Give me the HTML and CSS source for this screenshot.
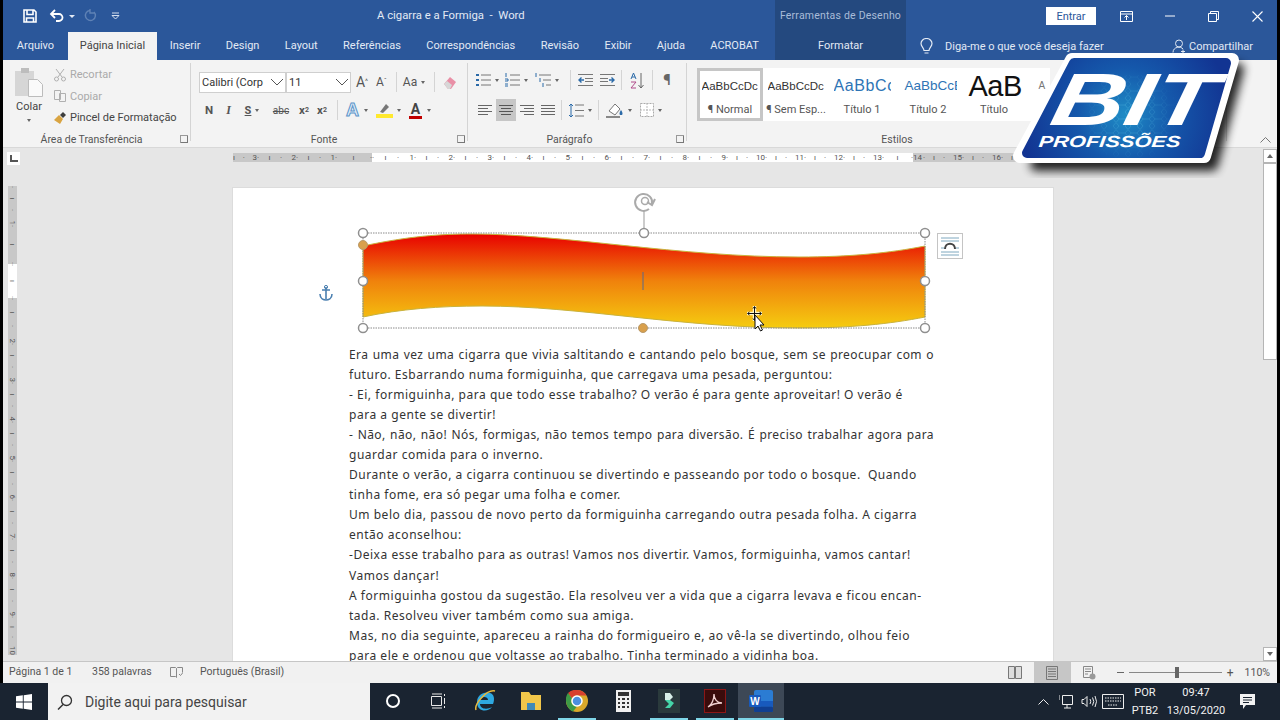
FILE: index.html
```html
<!DOCTYPE html>
<html lang="pt-BR">
<head>
    <meta charset="UTF-8">
    <title>A cigarra e a Formiga - Word</title>
    <link rel="stylesheet" href="styles.css">
</head>
<body>

    <div class="window">

        <div class="titlebar">
            <div class="qat">
                <svg width="16" height="16" viewBox="0 0 16 16"><path d="M2 2h10l2 2v10H2z M5 2.500v4h6v-4 M4.500 14v-4h7v4" fill="none" stroke="#fff" stroke-width="1.600"/></svg>
                <svg class="qat-undo" width="18" height="14" viewBox="0 0 18 14"><path d="M6 1 2 5l4 4M2 5h8a3.500 3.500 0 0 1 0 7H7" fill="none" stroke="#fff" stroke-width="1.800"/></svg>
                <span class="qat-caret"></span>
                <svg class="qat-redo" width="14" height="14" viewBox="0 0 14 14"><path d="M11 3a5 5 0 1 1-4-1.500M7 0v4h4" fill="none" stroke="#5f82b5" stroke-width="1.400"/></svg>
                <svg class="qat-more" width="9" height="8" viewBox="0 0 9 8"><path d="M1 1h7M1 3.500h7L4.500 7z" fill="none" stroke="#d5dfee"/></svg>
            </div>
            <div class="doc-title">A cigarra e a Formiga&nbsp; -&nbsp; Word</div>
            <div class="context-title">Ferramentas de Desenho</div>
            <div class="win-actions">
                <button class="signin" type="button">Entrar</button>
                <svg class="win-ribbon" width="13" height="11" viewBox="0 0 13 11"><path d="M.5.500h12v10H.500zM.5 3h12M6.500 9V4.500M4.500 6.500l2-2 2 2" fill="none" stroke="#fff"/></svg>
                <svg class="win-min" width="10" height="2" viewBox="0 0 10 2"><path d="M0 1h10" stroke="#fff"/></svg>
                <svg class="win-max" width="11" height="11" viewBox="0 0 11 11"><path d="M.5 2.500h8v8h-8zM2.500 2.500v-2h8v8h-2" fill="none" stroke="#fff"/></svg>
                <svg class="win-close" width="11" height="11" viewBox="0 0 11 11"><path d="m.5.500 10 10m0-10-10 10" stroke="#fff" stroke-width="1.100"/></svg>
            </div>
        </div>

        <div class="tabs">
            <div class="tab-list">
                <span class="tab tab-file">Arquivo</span>
                <span class="tab tab-active">Página Inicial</span>
                <span class="tab">Inserir</span>
                <span class="tab">Design</span>
                <span class="tab">Layout</span>
                <span class="tab">Referências</span>
                <span class="tab">Correspondências</span>
                <span class="tab">Revisão</span>
                <span class="tab">Exibir</span>
                <span class="tab">Ajuda</span>
                <span class="tab">ACROBAT</span>
            </div>
            <span class="tab tab-context">Formatar</span>
            <span class="tell-me">
                <svg width="13" height="17" viewBox="0 0 13 17"><path d="M4 12.500C4 10 1 8.500 1 5.500a5.500 5 0 0 1 11 0c0 3-3 4.500-3 7zM4.500 15h4" fill="none" stroke="#e3eaf5" stroke-width="1.200"/></svg>
                Diga-me o que você deseja fazer
            </span>
            <span class="share">
                <svg width="14" height="14" viewBox="0 0 14 14"><path d="M7 8a3.500 3.500 0 1 0 0-7 3.500 3.500 0 0 0 0 7zM1 13.500c0-6 8-6.500 10-3.500M11 10.500v3.500M9 12.500h4" fill="none" stroke="#dfe7f2"/></svg>
                Compartilhar
            </span>
        </div>

        <div class="ribbon">

            <section class="group group-clip">
                <div class="group-body clip-body">
                    <div class="paste">
                        <svg width="29" height="30" viewBox="0 0 29 30"><rect x="0" y="3" width="19" height="25" fill="#d6d6d6"/><rect x="6" y="0" width="8" height="5" fill="#bdbdbd"/><path d="M13.500 11.500h9l5 5v12h-14z" fill="#fafafa" stroke="#bcbcbc"/></svg>
                        <span class="paste-label">Colar</span>
                        <span class="caret"></span>
                    </div>
                    <div class="clip-list">
                        <div class="clip-row muted">
                            <svg width="14" height="14" viewBox="0 0 14 14"><path d="m3 1 6 8M11 1 5 9" stroke="#b0b0b0" fill="none"/><circle cx="3.500" cy="11" r="2" fill="none" stroke="#b0b0b0"/><circle cx="10.500" cy="11" r="2" fill="none" stroke="#b0b0b0"/></svg>
                            Recortar
                        </div>
                        <div class="clip-row muted">
                            <svg width="14" height="14" viewBox="0 0 14 14"><path d="M1.500 1.500h6v9h-6zM6.500 4.500h6v8h-6z" fill="#f3f3f3" stroke="#b0b0b0"/></svg>
                            Copiar
                        </div>
                        <div class="clip-row">
                            <svg width="14" height="14" viewBox="0 0 14 14"><path d="M1 9l5-5 4 4-3 5z" fill="#d9a441"/><path d="m7 4 3-3 3 3-3 3z" fill="#3d3d3d"/></svg>
                            Pincel de Formatação
                        </div>
                    </div>
                </div>
                <div class="group-foot"><span class="group-label">Área de Transferência</span><span class="launcher"></span></div>
            </section>

            <section class="group group-font">
                <div class="group-body font-body">
                    <div class="tool-row">
                        <div class="combo combo-name">Calibri (Corp<svg width="14" height="8" viewBox="0 0 14 8"><path d="m1 1 6 6 6-6" fill="none" stroke="#555"/></svg></div>
                        <div class="combo combo-size">11<svg width="14" height="8" viewBox="0 0 14 8"><path d="m1 1 6 6 6-6" fill="none" stroke="#555"/></svg></div>
                        <span class="tool w20 big-a">A<sup>^</sup></span>
                        <span class="tool w19 small-a">A<sup>ˇ</sup></span>
                        <span class="sep sep-a"></span>
                        <span class="tool w28 case-a">Aa<span class="caret"></span></span>
                        <span class="sep sep-b"></span>
                        <svg class="eraser" width="15" height="15" viewBox="0 0 15 15"><path d="m2 9 6-7 6 5-5 7H6z" fill="#e98fa6"/><path d="m2 9 3-3 5 4-2 4H6z" fill="#d7d7d7"/></svg>
                    </div>
                    <div class="tool-row">
                        <span class="tool w20 fmt-b">N</span>
                        <span class="tool w19 fmt-i">I</span>
                        <span class="tool w28 fmt-s"><u>S</u><span class="caret"></span></span>
                        <span class="tool w30 fmt-x"><s>abc</s></span>
                        <span class="tool w16 fmt-b">x<sub>2</sub></span>
                        <span class="tool w20 fmt-b">x<sup>2</sup></span>
                        <span class="sep sep-c"></span>
                        <span class="tool w30 fx-a"><span class="fx-letter">A</span><span class="caret"></span></span>
                        <span class="tool w32">
                            <svg width="17" height="16" viewBox="0 0 17 16"><path d="M4 10 10 2l3 3-6 6z" fill="#777"/><rect y="12" width="17" height="4" fill="#ffe92e"/></svg><span class="caret"></span>
                        </span>
                        <span class="tool w32 color-a"><span class="color-letter">A</span><span class="caret"></span></span>
                    </div>
                </div>
                <div class="group-foot"><span class="group-label">Fonte</span><span class="launcher"></span></div>
            </section>

            <section class="group group-para">
                <div class="group-body para-body">
                    <div class="tool-row">
                        <span class="tool w26"><svg width="15" height="14" viewBox="0 0 15 14"><path d="M5 2h10M5 7h10M5 12h10" stroke="#777"/><path d="M0 2h3M0 7h3M0 12h3" stroke="#2b6aa8" stroke-width="2"/></svg><span class="caret"></span></span>
                        <span class="tool w32"><svg width="15" height="14" viewBox="0 0 15 14"><path d="M5 2h10M5 7h10M5 12h10" stroke="#777"/><path d="M1 0v4M0 6h3v2H0M0 11h3M0 13h3" stroke="#2b6aa8" fill="none"/></svg><span class="caret"></span></span>
                        <span class="tool w30"><svg width="16" height="14" viewBox="0 0 16 14"><path d="M4 2h12M8 7h8M11 12h5" stroke="#777"/><path d="M1 0v4M5 5v4M8 10v4" stroke="#2b6aa8"/></svg><span class="caret"></span></span>
                        <span class="sep sep-d"></span>
                        <span class="tool w22"><svg width="15" height="12" viewBox="0 0 15 12"><path d="M0 .500h15M7 4.500h8M7 7.500h8M0 11.500h15" stroke="#777"/><path d="M6 6H1M3.500 3.500 1 6l2.500 2.500" fill="none" stroke="#2b6aa8" stroke-width="1.400"/></svg></span>
                        <span class="tool w22"><svg width="15" height="12" viewBox="0 0 15 12"><path d="M0 .500h15M0 4.500h8M0 7.500h8M0 11.500h15" stroke="#777"/><path d="M9 6h5M11.500 3.500 14 6l-2.500 2.500" fill="none" stroke="#2b6aa8" stroke-width="1.400"/></svg></span>
                        <span class="sep sep-e"></span>
                        <span class="tool w24"><svg width="15" height="17" viewBox="0 0 15 17"><path d="M1 7 3.500 1 6 7M2 5h3" fill="none" stroke="#2b6aa8"/><path d="M1 10h5l-5 6h5" fill="none" stroke="#b04a8a"/><path d="M11 1v15M8.500 13l2.500 3 2.500-3" fill="none" stroke="#666"/></svg></span>
                        <span class="sep sep-f"></span>
                        <span class="tool w22 pilcrow">¶</span>
                    </div>
                    <div class="tool-row">
                        <span class="tool w22"><svg width="14" height="11" viewBox="0 0 14 11"><path d="M0 .500h14M0 3.500h10M0 6.500h14M0 9.500h10" stroke="#666"/></svg></span>
                        <span class="tool w20 tool-on"><svg width="14" height="11" viewBox="0 0 14 11"><path d="M0 .500h14M2 3.500h10M0 6.500h14M2 9.500h10" stroke="#555"/></svg></span>
                        <span class="tool w21"><svg width="14" height="11" viewBox="0 0 14 11"><path d="M0 .500h14M4 3.500h10M0 6.500h14M4 9.500h10" stroke="#666"/></svg></span>
                        <span class="tool w21"><svg width="14" height="11" viewBox="0 0 14 11"><path d="M0 .500h14M0 3.500h14M0 6.500h14M0 9.500h14" stroke="#666"/></svg></span>
                        <span class="sep sep-g"></span>
                        <span class="tool w30"><svg width="16" height="15" viewBox="0 0 16 15"><path d="M7 2h9M7 7.500h9M7 13h9" stroke="#777"/><path d="M3 1v13M1 3l2-2 2 2M1 12l2 2 2-2" fill="none" stroke="#2b6aa8"/></svg><span class="caret"></span></span>
                        <span class="sep sep-h"></span>
                        <span class="tool w34"><svg width="18" height="17" viewBox="0 0 18 17"><path d="M3 9 9 2l5 5-5 6z" fill="#fff" stroke="#777"/><path d="M15 8c2 3 2 5 0 5s-2-2 0-5z" fill="#2b6aa8"/><path d="M0 15h14" stroke="#888" stroke-width="2"/></svg><span class="caret"></span></span>
                        <span class="tool w30"><svg width="14" height="14" viewBox="0 0 14 14"><path d="M.500.500h13v13H.500z" fill="#fff" stroke="#aaa" stroke-dasharray="2 1"/><path d="M7 0v14M0 7h14" stroke="#bbb" stroke-dasharray="2 1"/></svg><span class="caret"></span></span>
                    </div>
                </div>
                <div class="group-foot"><span class="group-label">Parágrafo</span><span class="launcher"></span></div>
            </section>

            <section class="group group-styles">
                <div class="gallery">
                    <div class="style-card style-selected"><span class="style-prev">AaBbCcDc</span><span class="style-name">¶ Normal</span></div>
                    <div class="style-card"><span class="style-prev">AaBbCcDc</span><span class="style-name">¶ Sem Esp...</span></div>
                    <div class="style-card"><span class="style-prev prev-h1">AaBbCc</span><span class="style-name">Título 1</span></div>
                    <div class="style-card"><span class="style-prev prev-h2">AaBbCcE</span><span class="style-name">Título 2</span></div>
                    <div class="style-card"><span class="style-prev prev-title">AaB</span><span class="style-name">Título</span></div>
                    <div class="style-card"><span class="style-prev prev-more">A</span></div>
                </div>
                <div class="group-foot styles-foot"><span class="group-label">Estilos</span></div>
            </section>

            <svg class="collapse" width="11" height="6" viewBox="0 0 11 6"><path d="m.5 5.500 5-5 5 5" fill="none" stroke="#777"/></svg>
        </div>

        <div class="work">
            <div class="work-main">
                <div class="ruler-row">
                    <span class="tab-stop"><svg width="8" height="7" viewBox="0 0 8 7"><path d="M1 0v6h7" fill="none" stroke="#555" stroke-width="2"/></svg></span>
                    <div class="ruler">
                        <div class="ruler-part ruler-off">
                            <span class="rc rc-24">ı · 3</span><span class="rc">· ı · 2</span><span class="rc">· ı · 1</span><span class="rc rc-37">· ı ·</span>
                        </div>
                        <div class="ruler-part ruler-on">
                            <span class="rc rc-42">· ı · 1</span><span class="rc">· ı · 2</span><span class="rc">· ı · 3</span><span class="rc">· ı · 4</span><span class="rc">· ı · 5</span><span class="rc">· ı · 6</span><span class="rc">· ı · 7</span><span class="rc">· ı · 8</span><span class="rc">· ı · 9</span><span class="rc">· ı · 10</span><span class="rc">· ı · 11</span><span class="rc">· ı · 12</span><span class="rc">· ı · 13</span><span class="rc rc-31">· ı ·</span>
                        </div>
                        <div class="ruler-part ruler-off">
                            <span class="rc rc-10">14</span><span class="rc">· ı · 15</span><span class="rc">· ı · 16</span><span class="rc">· ı · 17</span>
                        </div>
                    </div>
                </div>

                <div class="doc-area">
                    <div class="vruler">
                        <span class="vc vc-off">· ı · 1</span>
                        <span class="vc vc-off">· ı ·</span>
                        <span class="vc vc-on">· ı ·</span>
                        <span class="vc vc-off vc-45">· ı · 2</span>
                        <span class="vc vc-off">· ı · 3</span>
                        <span class="vc vc-off">· ı · 4</span>
                        <span class="vc vc-off">· ı · 5</span>
                        <span class="vc vc-off">· ı · 6</span>
                        <span class="vc vc-off">· ı · 7</span>
                        <span class="vc vc-off">· ı · 8</span>
                        <span class="vc vc-off">· ı · 9</span>
                        <span class="vc vc-off">· ı · 10</span>
                    </div>
                    <div class="page">
                        <svg class="shape" width="670" height="157" viewBox="310 188 670 157">
                            <defs>
                                <linearGradient id="waveFill" x1="0" y1="0" x2="0" y2="1">
                                    <stop offset="0" stop-color="#e80000"/>
                                    <stop offset="0.5" stop-color="#f0820c"/>
                                    <stop offset="1" stop-color="#f5cc10"/>
                                </linearGradient>
                            </defs>
                            <path d="M363 246C410 236 440 234 473 234C560 234 680 257 799 257C850 257 890 253 925 246V317C890 324 850 328 799 328C680 328 580 306 482 306C440 306 400 309 363 317Z" fill="url(#waveFill)" stroke="#c9b23c" stroke-width="1"/>
                            <rect x="363" y="233" width="562" height="95" fill="none" stroke="#8a8a8a" stroke-dasharray="1.500 1"/>
                            <path d="M644 211v22" stroke="#999"/>
                            <path d="M652 204a8.500 8.500 0 1 0-3 5M655 199l-3 6-5-3" fill="none" stroke="#aaa" stroke-width="2"/>
                            <circle cx="645" cy="201" r="3.500" fill="none" stroke="#aaa" stroke-width="1.500"/>
                            <g fill="#fff" stroke="#8f8f8f" stroke-width="1.500">
                                <circle cx="363" cy="233" r="4.500"/><circle cx="644" cy="233" r="4.500"/><circle cx="925" cy="233" r="4.500"/>
                                <circle cx="363" cy="281" r="4.500"/><circle cx="925" cy="281" r="4.500"/>
                                <circle cx="363" cy="328" r="4.500"/><circle cx="925" cy="328" r="4.500"/>
                            </g>
                            <g fill="#d9a04c" stroke="#b99a6a">
                                <circle cx="363" cy="245" r="4.500"/><circle cx="643" cy="328" r="4.500"/>
                            </g>
                            <path d="M643 272v18" stroke="#5b6b8c"/>
                            <path d="M326 287v12M322 290h8M320 294c0 5 4 6 6 6s6-1 6-6" fill="none" stroke="#4a7fb0" stroke-width="1.600"/>
                            <circle cx="326" cy="287" r="1.600" fill="none" stroke="#4a7fb0"/>
                            <rect x="937.500" y="233.500" width="25" height="25" fill="#fff" stroke="#c4c4c4"/>
                            <path d="M941 238h18M941 241h18M941 252h18M941 255h18M941 248h4M955 248h4" stroke="#7fa8bf"/>
                            <path d="M945 249c0-7 10-7 10 0" fill="none" stroke="#444" stroke-width="2"/>
                            <path d="M754.500 306v15M747 313.500h15" stroke="#fff6c8" stroke-width="3.500"/>
                            <path d="M754.500 307v13M748 313.500h13M753 308.500l1.500-2 1.500 2M753 318.500l1.500 2 1.500-2M749.500 312l-2 1.500 2 1.500M759.500 312l2 1.500-2 1.500" fill="none" stroke="#111"/>
                            <path d="M755 315v14l3-3 2.500 5 2-1-2.500-5h4z" fill="#fff" stroke="#111"/>
                        </svg>
                        <div class="story">
                            <span class="line line-full">Era uma vez uma cigarra que vivia saltitando e cantando pelo bosque, sem se preocupar com o</span>
                            <span class="line">futuro. Esbarrando numa formiguinha, que carregava uma pesada, perguntou:</span>
                            <span class="line">- Ei, formiguinha, para que todo esse trabalho? O verão é para gente aproveitar! O verão é</span>
                            <span class="line">para a gente se divertir!</span>
                            <span class="line line-full">- Não, não, não! Nós, formigas, não temos tempo para diversão. É preciso trabalhar agora para</span>
                            <span class="line">guardar comida para o inverno.</span>
                            <span class="line">Durante o verão, a cigarra continuou se divertindo e passeando por todo o bosque.&nbsp; Quando</span>
                            <span class="line">tinha fome, era só pegar uma folha e comer.</span>
                            <span class="line">Um belo dia, passou de novo perto da formiguinha carregando outra pesada folha. A cigarra</span>
                            <span class="line">então aconselhou:</span>
                            <span class="line">-Deixa esse trabalho para as outras! Vamos nos divertir. Vamos, formiguinha, vamos cantar!</span>
                            <span class="line">Vamos dançar!</span>
                            <span class="line">A formiguinha gostou da sugestão. Ela resolveu ver a vida que a cigarra levava e ficou encan-</span>
                            <span class="line">tada. Resolveu viver também como sua amiga.</span>
                            <span class="line">Mas, no dia seguinte, apareceu a rainha do formigueiro e, ao vê-la se divertindo, olhou feio</span>
                            <span class="line">para ele e ordenou que voltasse ao trabalho. Tinha terminado a vidinha boa.</span>
                        </div>
                    </div>
                </div>
            </div>

            <div class="scrollbar">
                <span class="scroll-btn"><span class="arrow-up"></span></span>
                <span class="scroll-thumb"></span>
                <span class="scroll-track"></span>
                <span class="scroll-btn"><span class="arrow-down"></span></span>
            </div>
        </div>

        <div class="statusbar">
            <span class="st-page">Página 1 de 1</span>
            <span class="st-words">358 palavras</span>
            <svg class="st-book" width="13" height="13" viewBox="0 0 13 13"><path d="M.5 1.500h5l1 1v9l-1-1h-5zM6.500 2.500l1-1h5v5M9 8l1.500 1.500L13 6.500" fill="none" stroke="#888"/></svg>
            <span class="st-lang">Português (Brasil)</span>
            <div class="st-right">
                <svg width="14" height="13" viewBox="0 0 14 13"><path d="M.5.500h6v12h-6zM7.500.500h6v12h-6z" fill="#ddd" stroke="#777"/></svg>
                <span class="view-on"><svg width="12" height="14" viewBox="0 0 12 14"><path d="M.5.500h11v13H.5z M2 3h8M2 5.500h8M2 8h8M2 10.500h8" fill="none" stroke="#777"/></svg></span>
                <svg class="view-web" width="13" height="14" viewBox="0 0 13 14"><path d="M.5.500h9v11H.5zM2 3h6M2 5.500h6M2 8h3" fill="none" stroke="#888"/><circle cx="9.500" cy="10.500" r="3" fill="#999"/></svg>
                <span class="zoom-minus"></span>
                <span class="zoom-track"><span class="zoom-thumb"></span></span>
                <span class="zoom-plus">+</span>
                <span class="zoom-pct">110%</span>
            </div>
        </div>
    </div>

    <div class="taskbar">
        <span class="start">
            <svg width="16" height="16" viewBox="0 0 16 16"><path d="M0 2.300 6.800 1.300V7.500H0zM7.700 1.200 16 0V7.500H7.700zM0 8.400H6.800V14.700L0 13.700zM7.700 8.400H16V16L7.700 14.800z" fill="#fff"/></svg>
        </span>
        <div class="search">
            <svg width="16" height="16" viewBox="0 0 16 16"><circle cx="9.500" cy="6.500" r="5" fill="none" stroke="#333" stroke-width="1.300"/><path d="M6 10.500 1 15.500" stroke="#333" stroke-width="1.500"/></svg>
            Digite aqui para pesquisar
        </div>
        <span class="task">
            <svg width="16" height="16" viewBox="0 0 16 16"><circle cx="8" cy="8" r="6" fill="none" stroke="#fff" stroke-width="2"/></svg>
        </span>
        <span class="task">
            <svg width="16" height="16" viewBox="0 0 16 16"><path d="M.5 3.500h10v9H.5zM1 1h10M1 15h10M13.500 1v2M13.500 5v6M13.500 13v2" fill="none" stroke="#e8e8e8"/></svg>
        </span>
        <span class="task">
            <svg width="24" height="24" viewBox="0 0 24 24"><path d="M20 15h-13c0 5 7 6 12 3-3 5-15 6-15-5C4 6 11 2 17 4c4 1 5 6 3 11zM7 11h8c0-4-7-4-8 0z" fill="#2ea8e0"/><path d="M3 21C1 15 14 0 22 2" fill="none" stroke="#e8b83c" stroke-width="1.500"/></svg>
        </span>
        <span class="task">
            <svg width="20" height="18" viewBox="0 0 20 18"><path d="M0 0h8l2 3h10v15H0z" fill="#f0c64a"/><rect x="6" y="11" width="8" height="7" fill="#3f89b8"/></svg>
        </span>
        <span class="task task-run">
            <svg width="22" height="22" viewBox="0 0 22 22"><circle cx="11" cy="11" r="11" fill="#d9a82a"/><path d="M11 0a11 11 0 0 1 9.500 5.500H11a5.500 5.500 0 0 0-5 3L2 3a11 11 0 0 1 9-3z" fill="#d8402f"/><path d="M2 3 6 8.500A5.500 5.500 0 0 0 11 16.500L7 21.500C0 18-2 9 2 3z" fill="#3d9a46"/><circle cx="11" cy="11" r="5" fill="#4d8fe0" stroke="#fff" stroke-width="1.500"/></svg>
        </span>
        <span class="task">
            <svg width="15" height="22" viewBox="0 0 15 22"><rect width="15" height="22" fill="#f0f0f0"/><rect x="2" y="2" width="11" height="4" fill="#333"/><path d="M2 9h2M6 9h3M11 9h2M2 13h2M6 13h3M11 13h2M2 17h2M6 17h3M11 17h2" stroke="#333" stroke-width="2"/></svg>
        </span>
        <span class="task task-run">
            <svg width="22" height="24" viewBox="0 0 22 24"><rect width="22" height="24" fill="#2a3a3c"/><path d="M7 4h5l3 4-3 3H7z" fill="#d8f0e8"/><path d="M7 11h5l4 3-4 5H7l4-4z" fill="#45d6a8"/></svg>
        </span>
        <span class="task task-run">
            <svg width="22" height="24" viewBox="0 0 22 24"><rect x=".500" y=".500" width="21" height="23" fill="#3a0c0c" stroke="#8c1616"/><path d="M4 18c4-2 6-8 6-13 0 5 3 9 8 9-4 0-10 1-14 4z" fill="none" stroke="#f0d0d0" stroke-width="1.300"/></svg>
        </span>
        <span class="task task-run task-word">
            <svg width="24" height="22" viewBox="0 0 24 22"><rect x="5" width="19" height="22" rx="2" fill="#2b7cd3"/><rect x="5" y="11" width="19" height="5.500" fill="#185abd"/><rect x="5" y="16.500" width="19" height="5.500" rx="1" fill="#103f91"/><rect y="5" width="12" height="12" rx="1" fill="#185abd"/><text class="word-w" x="6" y="14.500" text-anchor="middle">W</text></svg>
        </span>
        <div class="tray">
            <svg width="11" height="6" viewBox="0 0 11 6"><path d="m.5 5.500 5-5 5 5" fill="none" stroke="#eee"/></svg>
            <svg class="tray-net" width="14" height="15" viewBox="0 0 14 15"><path d="M3.500 1.500h10v9h-10zM0 1v5M8 11v3M5 14h7" fill="none" stroke="#eee"/></svg>
            <svg class="tray-vol" width="16" height="13" viewBox="0 0 16 13"><path d="M1 4.500h2l3-3v10l-3-3H1zM9 4q1.500 2.500 0 5M11.500 2.500q2.500 4 0 8M14 1q3 5.500 0 11" fill="none" stroke="#eee"/></svg>
            <svg class="tray-kbd" width="22" height="15" viewBox="0 0 22 15"><path d="M.5.500h21v14H.5z" fill="none" stroke="#eee"/><path d="M3 4h16M3 7h16M6 11h10" stroke="#eee" stroke-dasharray="1.500 1"/></svg>
            <span class="tray-lang">POR<br>PTB2</span>
            <span class="tray-clock">09:47<br>13/05/2020</span>
            <svg class="tray-note" width="15" height="15" viewBox="0 0 15 15"><path d="M0 0h15v11H6l-3 4v-4H0z" fill="#f2f2f2"/><path d="M3 3.500h9M3 6h9M3 8.500h6" stroke="#1a2431"/></svg>
        </div>
    </div>

    <svg class="logo" width="250" height="130" viewBox="1005 48 250 130">
        <defs>
            <radialGradient id="logoFill" gradientUnits="userSpaceOnUse" cx="1125" cy="115" r="105">
                <stop offset="0" stop-color="#1f8cc6"/>
                <stop offset="0.45" stop-color="#1558ab"/>
                <stop offset="1" stop-color="#123492"/>
            </radialGradient>
            <radialGradient id="hexFade" gradientUnits="userSpaceOnUse" cx="1130" cy="115" r="50">
                <stop offset="0" stop-color="#fff"/>
                <stop offset="1" stop-color="#000"/>
            </radialGradient>
            <pattern id="hexCells" width="12" height="14" patternUnits="userSpaceOnUse">
                <path d="M3 0 0 3.500 3 7h6l3 3.500L9 14M3 14l-3-3.500M9 0l3 3.500M3 7 0 10.500M9 7l3-3.500" fill="none" stroke="#6fd6f0" stroke-width="0.700"/>
            </pattern>
            <mask id="hexMask">
                <rect x="1005" y="48" width="250" height="130" fill="url(#hexFade)"/>
            </mask>
            <filter id="logoShadow" x="-15%" y="-15%" width="130%" height="140%">
                <feGaussianBlur stdDeviation="5"/>
            </filter>
        </defs>
        <path d="M1078 64H1232L1206 160H1030Z" fill="#000" opacity="0.85" stroke="#000" stroke-width="12" stroke-linejoin="round" filter="url(#logoShadow)" transform="translate(6 5)"/>
        <path d="M1072 60H1232L1204 156H1020Z" fill="#fff" stroke="#fff" stroke-width="14" stroke-linejoin="round"/>
        <path d="M1074 63H1226L1200 153H1027Z" fill="url(#logoFill)" stroke="url(#logoFill)" stroke-width="10" stroke-linejoin="round"/>
        <rect x="1080" y="75" width="100" height="85" fill="url(#hexCells)" mask="url(#hexMask)" opacity="0.4"/>
        <text class="logo-bit" x="1048" y="125" textLength="163" lengthAdjust="spacingAndGlyphs" transform="translate(26.500 0) skewX(-12)">BIT</text>
        <text class="logo-sub" x="1038" y="147" textLength="142" lengthAdjust="spacingAndGlyphs" transform="translate(15.600 0) skewX(-6)">PROFISSÕES</text>
    </svg>

</body>
</html>
```

FILE: styles.css
```css
* {
    box-sizing: border-box;
}
body {
    margin: 0;
    width: 1280px;
    height: 720px;
    overflow: hidden;
    position: relative;
    background: #000;
    font-family: Roboto, "Noto Sans", sans-serif;
    font-size: 11px;
    color: #444;
}
svg {
    flex: none;
}

/* window */
.window {
    margin: 0 3px;
    height: 683px;
    display: flex;
    flex-direction: column;
}
.titlebar {
    height: 32px;
    background: #2b579a;
    color: #e3eaf5;
    display: flex;
    align-items: center;
}
.qat {
    width: 372px;
    padding-left: 19px;
    display: flex;
    align-items: center;
}
.qat-undo {
    margin-left: 11px;
}
.qat-caret {
    margin-left: 2px;
    border: 3px solid transparent;
    border-top-color: #e3eaf5;
    border-bottom: 0;
}
.qat-redo {
    margin-left: 8px;
}
.qat-more {
    margin-left: 14px;
}
.doc-title {
    width: 400px;
    padding: 0 0 2px 2px;
    font-size: 11.300px;
}
.context-title {
    width: 131px;
    height: 32px;
    line-height: 31px;
    text-align: center;
    background: #24497f;
    color: #a9bcd8;
    font-size: 10.500px;
    letter-spacing: 0.2px;
}
.win-actions {
    flex: 1;
    display: flex;
    align-items: center;
    padding-left: 140px;
}
.signin {
    width: 50px;
    height: 18px;
    border: 0;
    padding: 0;
    background: #fff;
    color: #2b579a;
    font: 11px Roboto, sans-serif;
}
.win-ribbon {
    margin-left: 24px;
}
.win-min {
    margin-left: 32px;
}
.win-max {
    margin-left: 33px;
}
.win-close {
    margin-left: 33px;
}

.tabs {
    height: 28px;
    background: #2b579a;
    color: #e3eaf5;
    display: flex;
    align-items: center;
    font-size: 11px;
}
.tab-list {
    width: 772px;
    display: flex;
    flex: none;
}
.tab {
    height: 28px;
    line-height: 27px;
    padding: 0 12.700px;
    flex: none;
}
.tab-file {
    width: 65px;
    padding: 0;
    text-align: center;
}
.tab-active {
    width: 89px;
    padding: 0;
    text-align: center;
    background: #f3f3f3;
    color: #444;
}
.tab-context {
    width: 131px;
    padding: 0;
    text-align: center;
    background: #24497f;
}
.tell-me {
    display: flex;
    align-items: center;
    gap: 12px;
    margin-left: 14px;
    width: 252px;
    flex: none;
}
.share {
    display: flex;
    align-items: center;
    gap: 3px;
}

/* ribbon */
.ribbon {
    height: 88px;
    background: #f3f3f3;
    border-bottom: 1px solid #d8d8d8;
    padding-top: 3px;
    display: flex;
    position: relative;
}
.group {
    display: flex;
    flex-direction: column;
    height: 84px;
}
.group-clip, .group-font, .group-para, .group-styles {
    background: linear-gradient(#d4d4d4, #d4d4d4) right top / 1px 78px no-repeat;
}
.group-clip {
    width: 188px;
}
.group-font {
    width: 277px;
}
.group-para {
    width: 219px;
}
.group-styles {
    width: 540px;
}
.group-body {
    height: 68px;
}
.group-foot {
    height: 16px;
    display: flex;
    align-items: center;
    font-size: 10.500px;
    color: #555;
}
.group-label {
    flex: 1;
    text-align: center;
}
.group-para .group-label {
    padding-right: 5px;
}
.launcher {
    width: 8px;
    height: 8px;
    margin-right: 3px;
    border: 1px solid #999;
    border-width: 1px 0 0 1px;
    box-shadow: inset -2px -2px 0 -1px #777;
}
.clip-body {
    display: flex;
}
.paste {
    width: 50px;
    padding: 5px 0 0 2px;
    display: flex;
    flex-direction: column;
    align-items: center;
}
.paste-label {
    margin-top: 2px;
    font-size: 11px;
}
.paste .caret {
    margin: 6px 0 0;
}
.clip-list {
    padding-top: 1px;
}
.clip-row {
    height: 21.500px;
    display: flex;
    align-items: center;
    gap: 3px;
    font-size: 11px;
    white-space: nowrap;
}
.muted {
    color: #aaa;
}
.caret {
    display: inline-block;
    margin-left: 4px;
    border: 2.500px solid transparent;
    border-top: 3px solid #666;
    border-bottom: 0;
}
.tool-row {
    height: 22px;
    display: flex;
    align-items: center;
}
.font-body {
    padding: 8px 0 0 8px;
    display: flex;
    flex-direction: column;
    gap: 6px;
}
.para-body {
    padding: 6px 0 0 6px;
    display: flex;
    flex-direction: column;
    gap: 8px;
}
.combo {
    height: 21px;
    background: #fff;
    border: 1px solid #cfcfcf;
    display: flex;
    align-items: center;
    justify-content: space-between;
    padding: 0 1px 0 2px;
    color: #333;
}
.combo-name {
    width: 87px;
}
.combo-size {
    width: 65px;
    margin-right: 1px;
}
.tool {
    height: 22px;
    display: flex;
    align-items: center;
    justify-content: center;
    flex: none;
    color: #555;
}
.w16 { width: 16px; }
.w19 { width: 19px; }
.w20 { width: 20px; }
.w21 { width: 21px; }
.w22 { width: 22px; }
.w24 { width: 24px; }
.w26 { width: 26px; }
.w28 { width: 28px; }
.w30 { width: 30px; }
.w32 { width: 32px; }
.w34 { width: 34px; }
.tool sup, .tool sub {
    font-size: 7px;
    line-height: 0;
}
.big-a {
    font-size: 14px;
}
.small-a {
    font-size: 12px;
}
.case-a {
    font-size: 12px;
}
.sep {
    width: 1px;
    height: 20px;
    background: #d4d4d4;
    flex: none;
}
.sep-a {
    margin: 0 3px 0 5px;
}
.sep-b {
    margin: 0 7px 0 6px;
}
.sep-c {
    margin: 0 4px 0 5px;
}
.sep-d {
    margin: 0 3px 0 8px;
}
.sep-e, .sep-f {
    margin: 0 3px;
}
.sep-g, .sep-h {
    margin: 0 3px;
}
.fmt-b {
    font-weight: 700;
    font-size: 11.500px;
}
.fmt-i {
    font-style: italic;
    font-weight: 700;
    font-family: "Liberation Serif", serif;
    font-size: 12px;
}
.fmt-s {
    font-weight: 700;
}
.fmt-x {
    font-size: 10px;
}
.fx-a .caret, .color-a .caret {
    margin-left: 5px;
}
.fx-letter {
    font: 700 18px "Liberation Sans", sans-serif;
    color: #e4eef8;
    -webkit-text-stroke: 1px #5b94c9;
}
.color-letter {
    font-weight: 700;
    font-size: 14px;
    line-height: 14px;
    color: #444;
    border-bottom: 3px solid #c00000;
    padding: 0 2px;
}
.pilcrow {
    font-size: 15px;
    font-weight: 700;
    color: #666;
}
.tool-on {
    background: #c6c6c6;
}
.gallery {
    margin: 5px 0 0 10px;
    width: 353px;
    height: 53px;
    background: #fff;
    display: flex;
    flex: none;
}
.style-card {
    width: 66px;
    flex: none;
    display: flex;
    flex-direction: column;
    align-items: center;
    overflow: hidden;
    white-space: nowrap;
    padding: 3px 3px 0;
    color: #333;
}
.style-selected {
    border: 3px solid #c6c6c6;
    padding-top: 0;
    background: #fff;
}
.style-prev {
    height: 32px;
    line-height: 30px;
    font-size: 11.500px;
    font-family: "Liberation Sans", sans-serif;
    width: 57px;
    overflow: hidden;
    text-align: left;
    flex: none;
}
.prev-h1 {
    font-size: 16px;
    letter-spacing: 0.6px;
    color: #2e74b5;
}
.prev-h2 {
    padding-left: 5px;
    font-size: 13.500px;
    color: #2e74b5;
}
.prev-title {
    padding-left: 3px;
    font-size: 29px;
    letter-spacing: -0.5px;
    color: #111;
}
.prev-more {
    padding-left: 7px;
    color: #777;
    font-size: 10px;
}
.style-name {
    font-size: 11px;
    color: #555;
}
.styles-foot {
    margin-top: 10px;
    width: 420px;
}
.collapse {
    margin: 74px 0 0 33px;
}

/* rulers and document */
.work {
    flex: 1;
    display: flex;
    min-height: 0;
    background: #e6e6e6;
}
.work-main {
    width: 1260px;
    display: flex;
    flex-direction: column;
}
.ruler-row {
    height: 20px;
    display: flex;
    align-items: center;
    flex: none;
}
.tab-stop {
    margin: 0 0 0 4px;
    width: 13px;
    height: 13px;
    background: #fff;
    display: flex;
    align-items: center;
    justify-content: center;
    flex: none;
}
.ruler {
    margin: 0 0 2px 213px;
    height: 9px;
    display: flex;
}
.ruler-part {
    display: flex;
}
.ruler-off {
    background: #c8c8c8;
}
.ruler-on {
    background: #fff;
}
.rc {
    width: 39px;
    font-size: 8px;
    line-height: 9px;
    color: #555;
    text-align: justify;
    text-align-last: justify;
    white-space: normal;
    overflow: hidden;
    height: 9px;
}
.rc-24 { width: 24px; }
.rc-37 { width: 37px; }
.rc-42 { width: 42px; }
.rc-31 { width: 31px; }
.rc-10 { width: 10px; }
.doc-area {
    flex: 1;
    min-height: 0;
    display: flex;
    overflow: hidden;
}
.vruler {
    margin: 18px 0 0 5px;
    width: 9px;
    flex: none;
    display: flex;
    flex-direction: column;
}
.vc {
    height: 39px;
    flex: none;
    writing-mode: vertical-rl;
    font-size: 8px;
    line-height: 9px;
    color: #555;
    text-align: justify;
    text-align-last: justify;
    overflow: hidden;
}
.vc-off {
    background: #c8c8c8;
}
.vc-on {
    height: 34px;
    background: #fff;
}
.vc-45 {
    height: 45px;
}
.page {
    margin: 20px 0 0 216px;
    width: 820px;
    height: 600px;
    background: #fff;
    flex: none;
    box-shadow: 0 0 0 1px #dcdcdc;
}
.shape {
    display: block;
    margin-left: 77px;
}
.story {
    margin-left: 116px;
    width: 585px;
    font-family: "Noto Sans", sans-serif;
    font-size: 12px;
    letter-spacing: 0.530px;
    line-height: 20.050px;
    color: #333;
}
.line {
    display: block;
    white-space: nowrap;
}
.line-full {
    letter-spacing: 0.400px;
    white-space: normal;
    text-align: justify;
    text-align-last: justify;
}
.scrollbar {
    margin: 1px 0 0;
    width: 14px;
    display: flex;
    flex-direction: column;
    background: #e6e6e6;
}
.scroll-btn {
    height: 14px;
    background: #fff;
    border: 1px solid #b5b5b5;
    display: flex;
    align-items: center;
    justify-content: center;
    flex: none;
}
.arrow-up {
    border: 3px solid transparent;
    border-bottom: 4px solid #666;
    border-top: 0;
}
.arrow-down {
    border: 3px solid transparent;
    border-top: 4px solid #666;
    border-bottom: 0;
}
.scroll-thumb {
    height: 197px;
    background: #fff;
    border: 1px solid #b5b5b5;
    flex: none;
}
.scroll-track {
    flex: 1;
}

/* status bar */
.statusbar {
    height: 22px;
    background: #f1f1f1;
    border-top: 1px solid #c6c6c6;
    display: flex;
    align-items: center;
    flex: none;
    font-size: 10.500px;
    color: #555;
}
.st-page {
    margin: 0 0 2px 6px;
    width: 83px;
}
.st-words {
    margin-bottom: 2px;
    width: 78px;
}
.st-book {
    margin-right: 17px;
}
.st-lang {
    margin-bottom: 2px;
}
.st-right {
    margin-left: auto;
    height: 21px;
    display: flex;
    align-items: center;
}
.view-on {
    margin-left: 12px;
    width: 37px;
    height: 21px;
    background: #c6c6c6;
    display: flex;
    align-items: center;
    justify-content: center;
}
.view-web {
    margin-left: 12px;
}
.zoom-minus {
    margin-left: 21px;
    width: 7px;
    height: 1px;
    background: #666;
}
.zoom-track {
    margin-left: 5px;
    width: 93px;
    height: 1px;
    background: #888;
    display: flex;
    align-items: center;
    padding-left: 46px;
}
.zoom-thumb {
    width: 4px;
    height: 11px;
    background: #666;
}
.zoom-plus {
    margin-left: 5px;
    font-size: 12px;
}
.zoom-pct {
    margin: 0 7px 0 11px;
}

/* taskbar */
.taskbar {
    height: 37px;
    background: #1a2431;
    display: flex;
    align-items: center;
    color: #f2f2f2;
}
.start {
    width: 48px;
    display: flex;
    justify-content: center;
}
.search {
    width: 322px;
    height: 37px;
    background: #f2f2f2;
    color: #444;
    font-size: 14px;
    display: flex;
    align-items: center;
    gap: 12px;
    padding-left: 9px;
    flex: none;
}
.task {
    width: 46px;
    height: 37px;
    display: flex;
    align-items: center;
    justify-content: center;
    flex: none;
    border-bottom: 2px solid transparent;
}
.task-run {
    width: 38px;
    margin: 0 4px;
    border-bottom-color: #7fd6e8;
}
.task-word {
    width: 46px;
    margin: 0;
    background: #3d4856;
}
.word-w {
    fill: #fff;
    font: 700 10px "Liberation Sans", sans-serif;
}
.tray {
    margin-left: auto;
    display: flex;
    align-items: center;
    padding-right: 25px;
}
.tray-net {
    margin-left: 10px;
}
.tray-vol {
    margin-left: 8px;
}
.tray-kbd {
    margin-left: 5px;
}
.tray-lang {
    margin-left: 4px;
    width: 34px;
    text-align: center;
    font-size: 11px;
    line-height: 18px;
}
.tray-clock {
    width: 68px;
    text-align: center;
    font-size: 11px;
    line-height: 18px;
}
.tray-note {
    margin-left: 10px;
}

/* channel logo over the window */
.logo {
    position: absolute;
    left: 1005px;
    top: 48px;
}
.logo-bit {
    fill: #fff;
    font: italic 700 74px "Liberation Sans", sans-serif;
}
.logo-sub {
    fill: #fff;
    font: italic 700 16px "Liberation Sans", sans-serif;
}
```
